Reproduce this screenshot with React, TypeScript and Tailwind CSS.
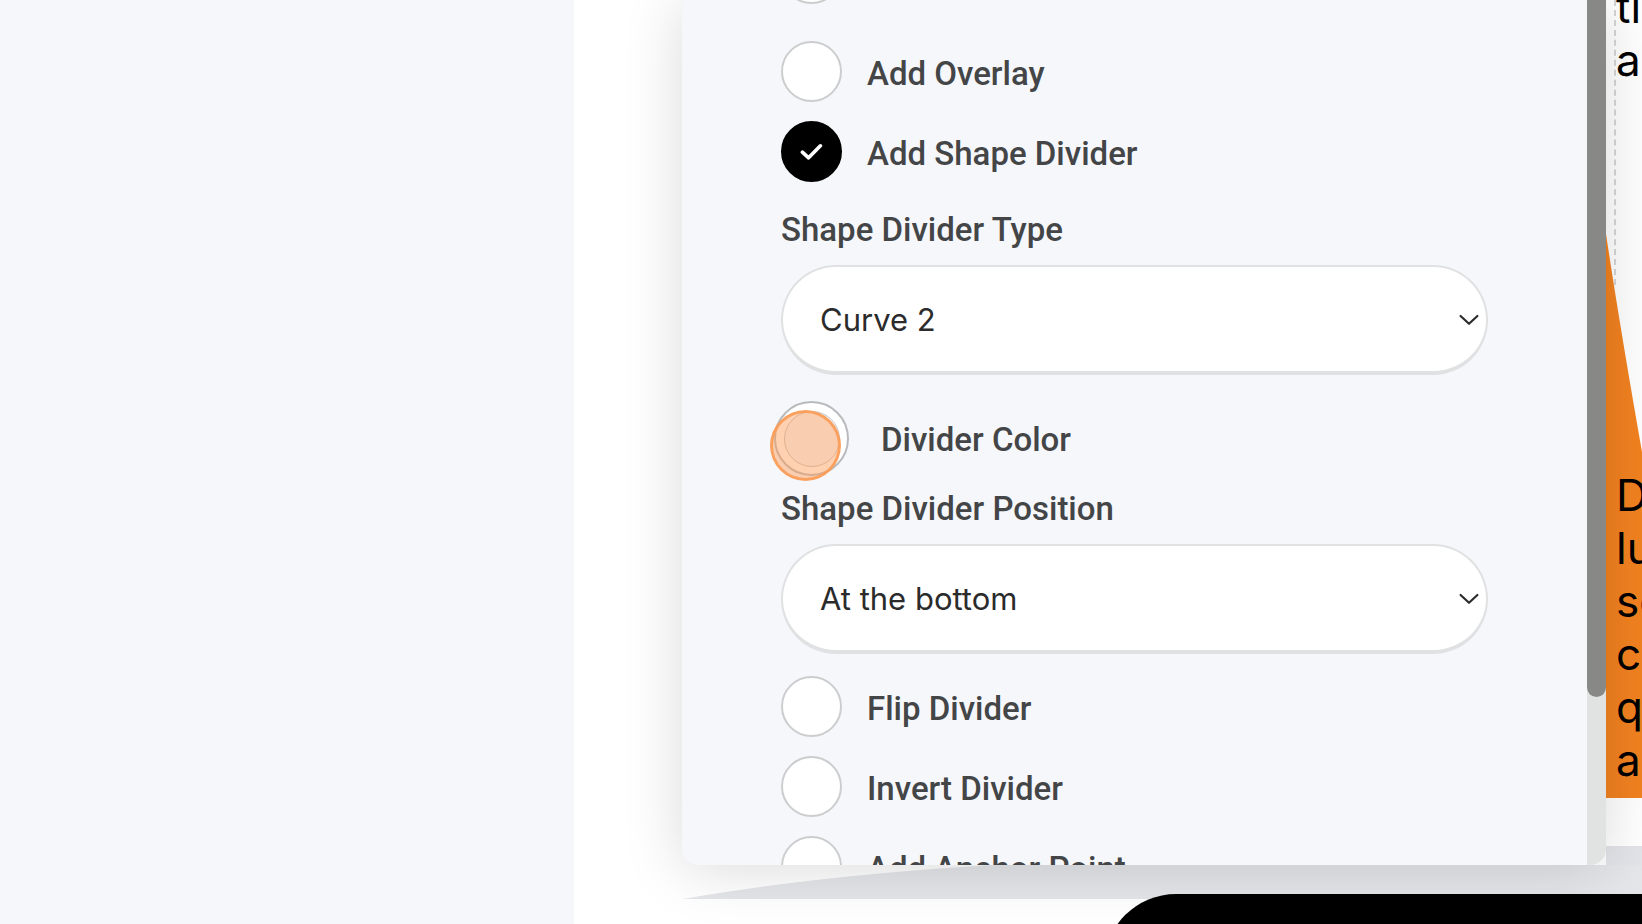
import React, { useState } from 'react';

interface ToggleRowProps {
  id: string;
  label: string;
  defaultChecked?: boolean;
}

const ToggleRow: React.FC<ToggleRowProps> = ({ id, label, defaultChecked = false }) => {
  const [checked, setChecked] = useState(defaultChecked);

  return (
    <div className="flex items-center gap-[25px]">
      <div className="relative size-[61px] shrink-0">
        <input
          id={id}
          type="checkbox"
          checked={checked}
          onChange={(e) => setChecked(e.target.checked)}
          className="block size-[61px] appearance-none rounded-full border-2 border-[#cccdce] bg-white checked:border-black checked:bg-black"
        />
        {checked && (
          <svg
            viewBox="0 0 24 18"
            className="pointer-events-none absolute top-[22px] left-[19px] h-[18px] w-6"
            fill="none"
            stroke="white"
            strokeWidth="3.6"
            strokeLinecap="round"
            strokeLinejoin="round"
          >
            <path d="M2.4 9.2 L8.6 14.8 L20.4 2.8" />
          </svg>
        )}
      </div>
      <label htmlFor={id} className="pt-1 text-[33px] leading-10 font-medium">
        {label}
      </label>
    </div>
  );
};

interface SelectFieldProps {
  id: string;
  label: string;
  options: string[];
}

const SelectField: React.FC<SelectFieldProps> = ({ id, label, options }) => {
  return (
    <div className="flex flex-col gap-[15px]">
      <label htmlFor={id} className="text-[33px] leading-10 font-medium">
        {label}
      </label>
      <div className="relative">
        <select
          id={id}
          className="block h-[110px] w-full appearance-none rounded-full border-2 border-b-4 border-[#e0e1e2] bg-white pt-0.5 pr-16 pl-[37px] font-['Inter',sans-serif] text-[31px] text-[#2b2b2c]"
        >
          {options.map((option) => (
            <option key={option}>{option}</option>
          ))}
        </select>
        <svg
          viewBox="0 0 20 12"
          className="pointer-events-none absolute top-[49px] right-[9px] h-3 w-5"
          fill="none"
          stroke="#2b2b2c"
          strokeWidth="2.2"
          strokeLinecap="round"
          strokeLinejoin="round"
        >
          <path d="M1.6 2 L10 9.8 L18.4 2" />
        </svg>
      </div>
    </div>
  );
};

const SettingsPanel: React.FC = () => {
  return (
    <section className="relative z-10 flex min-w-0 flex-1 overflow-hidden rounded-b-2xl bg-[#f5f7fb] shadow-[0_4px_60px_rgba(0,0,0,0.15)]">
      <form className="-mt-[57px] flex flex-1 flex-col px-[99px] font-['Roboto',sans-serif] text-[#444547]">
        <div className="mb-[37px] flex h-[61px]">
          <input
            type="checkbox"
            aria-label="Background"
            className="size-[61px] appearance-none rounded-full border-2 border-[#cccdce] bg-white"
          />
        </div>
        <div className="flex flex-col gap-[19px]">
          <ToggleRow id="overlay" label="Add Overlay" />
          <ToggleRow id="shape-divider" label="Add Shape Divider" defaultChecked />
        </div>
        <div className="mt-7">
          <SelectField id="divider-type" label="Shape Divider Type" options={['Curve 2', 'Curve 1']} />
        </div>
        <div className="mt-[26px] mb-[13px] -ml-[7px] flex items-center gap-8">
          <div className="relative size-[75px] shrink-0">
            <button
              id="divider-color"
              type="button"
              className="flex size-[75px] items-center justify-center rounded-full border-2 border-[#b9babd] bg-white"
            >
              <span className="size-14 rounded-full border border-[#c5c6c9] bg-[#f5f7fb]" />
            </button>
            {/* click marker */}
            <span className="pointer-events-none absolute top-[9px] -left-1 size-[71px] rounded-full border-[3px] border-[#fb9b57]/90 bg-[#ff9a52]/45" />
          </div>
          <label htmlFor="divider-color" className="pt-0.5 text-[33px] leading-10 font-medium">
            Divider Color
          </label>
        </div>
        <SelectField
          id="divider-position"
          label="Shape Divider Position"
          options={['At the bottom', 'At the top']}
        />
        <div className="mt-[22px] flex flex-col gap-[19px]">
          <ToggleRow id="flip" label="Flip Divider" />
          <ToggleRow id="invert" label="Invert Divider" />
          <ToggleRow id="anchor" label="Add Anchor Point" />
        </div>
      </form>
      <div className="flex w-[19px] shrink-0 flex-col bg-[#e1e2e2]">
        <div className="h-[697px] rounded-b-full bg-[#888987]" />
      </div>
    </section>
  );
};

const PageStrip: React.FC = () => {
  return (
    <div className="flex w-9 shrink-0 flex-col overflow-hidden bg-white font-['Inter',sans-serif] text-[44px] leading-[53px] text-black">
      <div className="relative h-[798px] shrink-0">
        <svg
          viewBox="0 0 36 564"
          preserveAspectRatio="none"
          className="absolute top-[234px] left-0 h-[564px] w-full"
        >
          <path d="M0 0 Q14 93 36 218 V564 H0 Z" fill="#f28220" />
        </svg>
        <div className="absolute top-0 left-2 h-[285px] border-l-2 border-dashed border-[#d6d6d6]" />
        <div className="relative -mt-[19px] pl-2.5 whitespace-nowrap">
          <p>tl</p>
          <p>a</p>
        </div>
        <div className="relative mt-[382px] pl-2.5 whitespace-nowrap">
          <p>D</p>
          <p>lu</p>
          <p>se</p>
          <p>c</p>
          <p>q</p>
          <p>a</p>
        </div>
      </div>
      <div className="h-12 shrink-0" />
      <div className="flex-1 bg-[#e2e4e9]" />
    </div>
  );
};

const App: React.FC = () => {
  return (
    <div className="flex h-screen overflow-hidden bg-white">
      <aside className="w-[574px] shrink-0 bg-[#f5f7fb]" />
      <main className="flex min-w-0 flex-1 flex-col pl-[108px]">
        <div className="flex min-h-0 flex-1">
          <SettingsPanel />
          <PageStrip />
        </div>
        <footer className="relative h-[59px] shrink-0">
          <svg viewBox="0 0 960 34" preserveAspectRatio="none" className="h-[34px] w-full">
            <path d="M0 34 Q140 10 310 0 H960 V34 Z" fill="#e4e6ea" />
          </svg>
          <div className="absolute right-0 bottom-0 z-20 h-[30px] w-[56%] overflow-hidden">
            <div className="h-36 rounded-l-full bg-black" />
          </div>
        </footer>
      </main>
    </div>
  );
};

export default App;
